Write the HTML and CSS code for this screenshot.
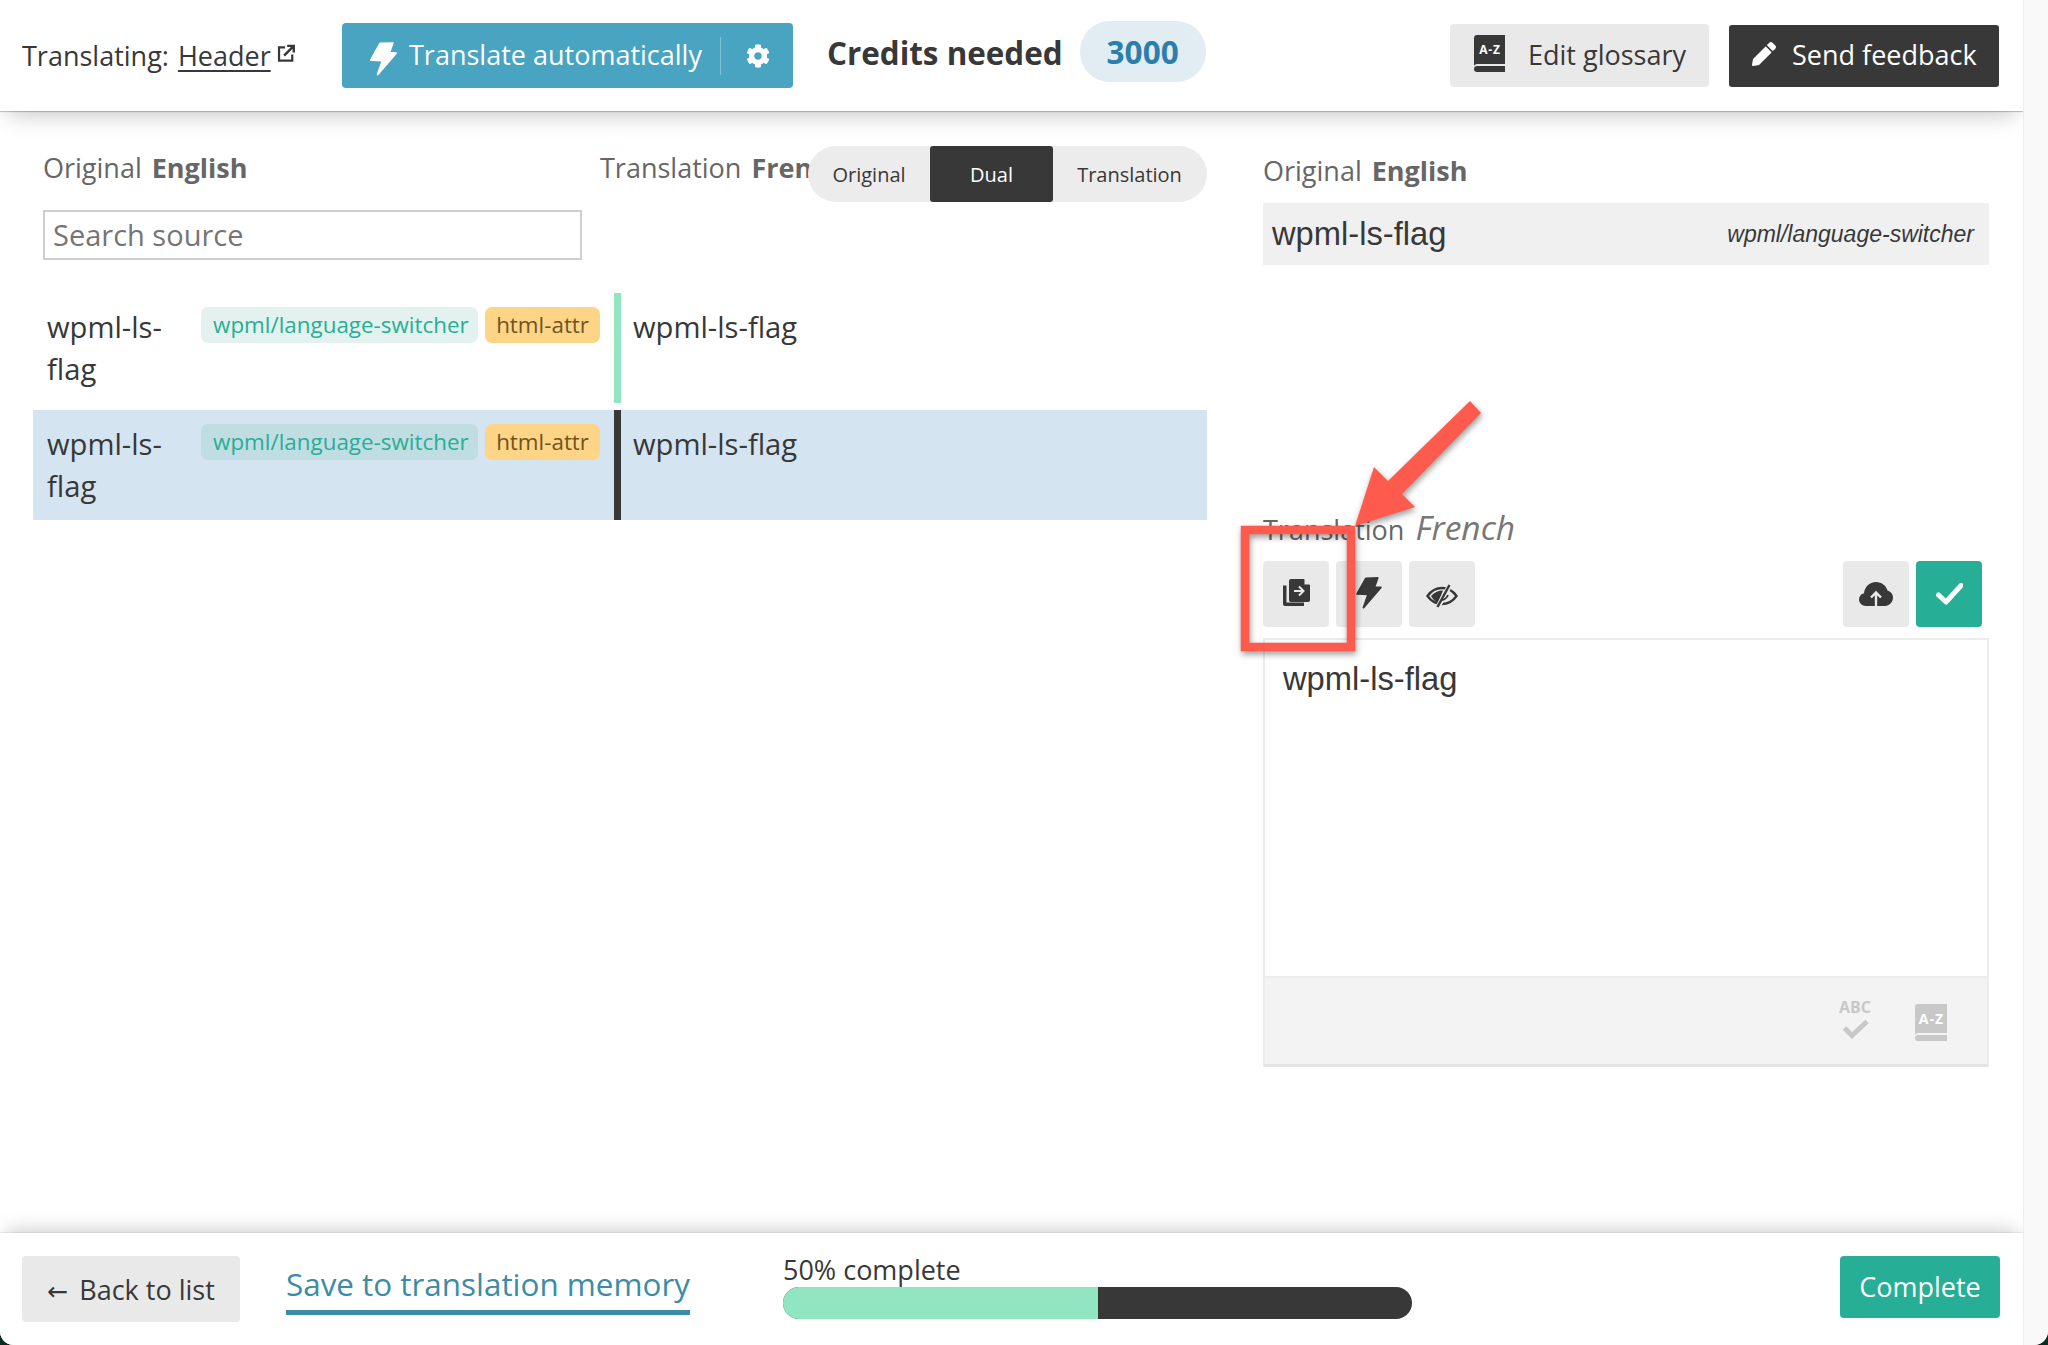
FILE: index.html
```html
<!DOCTYPE html>
<html lang="en">
<head>
<meta charset="utf-8">
<title>Translating: Header</title>
<link rel="stylesheet" href="styles.css">
</head>
<body>
<div class="window">
  <div class="app">
    <header class="topbar">
      <div class="crumb">
        <span>Translating:</span>
        <a class="crumb-link">Header</a>
        <svg class="ext-icon" viewBox="0 0 18 18"><path d="M8 3H2v13h13v-6" fill="none" stroke="currentColor" stroke-width="2.200"/><path d="M7 11 16 2M10 1.500H16.500V8" fill="none" stroke="currentColor" stroke-width="2.400"/></svg>
      </div>
      <button class="btn-auto">
        <svg class="bolt-lg" viewBox="0 0 28 35"><path d="M10.500 1.500 23.500 1 20 11 27 11.500 8 33.500 13 19 1 18.500Z" fill="#fff" stroke="#fff" stroke-width="2" stroke-linejoin="round"/></svg>
        <span class="auto-label">Translate automatically</span>
        <span class="auto-sep"></span>
        <svg class="gear" viewBox="0 0 512 512"><path fill="#fff" d="M487.400 315.700l-42.600-24.600c4.300-23.200 4.300-47 0-70.200l42.600-24.600c4.900-2.800 7.100-8.600 5.500-14-11.100-35.600-30-67.800-54.700-94.600-3.800-4.100-10-5.100-14.800-2.300L380.800 110c-17.900-15.400-38.500-27.300-60.800-35.100V25.800c0-5.600-3.900-10.500-9.400-11.700-36.700-8.200-74.300-7.800-109.200 0-5.500 1.200-9.400 6.100-9.400 11.700V75c-22.200 7.900-42.800 19.800-60.800 35.100L88.700 85.500c-4.900-2.800-11-1.900-14.800 2.300-24.700 26.700-43.600 58.900-54.700 94.600-1.700 5.400.6 11.200 5.500 14L67.300 221c-4.300 23.200-4.300 47 0 70.200l-42.600 24.600c-4.900 2.800-7.100 8.600-5.500 14 11.100 35.600 30 67.800 54.700 94.600 3.800 4.100 10 5.100 14.800 2.300l42.600-24.600c17.900 15.400 38.500 27.300 60.800 35.100v49.200c0 5.600 3.900 10.500 9.400 11.700 36.700 8.200 74.300 7.800 109.200 0 5.500-1.200 9.400-6.100 9.400-11.700v-49.200c22.200-7.900 42.800-19.800 60.800-35.100l42.600 24.600c4.900 2.800 11 1.900 14.800-2.300 24.700-26.700 43.600-58.900 54.700-94.600 1.500-5.500-.7-11.300-5.600-14.100zM256 336c-44.100 0-80-35.900-80-80s35.900-80 80-80 80 35.900 80 80-35.900 80-80 80z"/></svg>
      </button>
      <strong class="credits-label">Credits needed</strong>
      <span class="credits-badge">3000</span>
      <div class="top-actions">
        <button class="btn-glossary">
          <svg class="book" viewBox="0 0 31 37"><path d="M3 0h28v29H3.500C1.500 29 0 30 0 31V3C0 1.300 1.300 0 3 0Z" fill="#383838"/><path d="M3 31h28v6H3c-1.800 0-3-1.200-3-3s1.200-3 3-3Z" fill="#383838"/><text x="16" y="19" class="book-text">A-Z</text></svg>
          <span>Edit glossary</span>
        </button>
        <button class="btn-feedback">
          <svg class="pencil" viewBox="0 0 512 512"><path fill="#fff" d="M497.900 142.100l-46.100 46.100c-4.700 4.700-12.300 4.700-17 0l-111-111c-4.700-4.700-4.700-12.300 0-17l46.100-46.100c18.700-18.700 49.100-18.700 67.900 0l60.100 60.100c18.800 18.700 18.800 49.100 0 67.900zM284.200 99.800L21.600 362.400.4 483.900c-2.900 16.400 11.400 30.600 27.800 27.800l121.500-21.300 262.600-262.600c4.700-4.700 4.700-12.300 0-17l-111-111c-4.800-4.700-12.400-4.700-17.100 0z"/></svg>
          <span>Send feedback</span>
        </button>
      </div>
    </header>

    <main class="workspace">
      <section class="list-pane">
        <div class="list-head">
          <div class="head-label"><span>Original</span> <b>English</b></div>
          <div class="head-label"><span>Translation</span> <b>French</b></div>
        </div>
        <div class="view-switch">
          <span class="seg seg-orig">Original</span>
          <span class="seg seg-dual">Dual</span>
          <span class="seg seg-trans">Translation</span>
        </div>
        <input class="search" type="text" placeholder="Search source">
        <div class="rows">
          <div class="row">
            <div class="src">
              <span class="src-text">wpml-ls-flag</span>
              <span class="tag tag-domain">wpml/language-switcher</span>
              <span class="tag tag-attr">html-attr</span>
            </div>
            <div class="bar bar-done"></div>
            <div class="dst">wpml-ls-flag</div>
          </div>
          <div class="row row-active">
            <div class="src">
              <span class="src-text">wpml-ls-flag</span>
              <span class="tag tag-domain">wpml/language-switcher</span>
              <span class="tag tag-attr">html-attr</span>
            </div>
            <div class="bar bar-current"></div>
            <div class="dst">wpml-ls-flag</div>
          </div>
        </div>
      </section>

      <section class="edit-pane">
        <div class="head-label edit-orig"><span>Original</span> <b>English</b></div>
        <div class="source-box">
          <span class="source-text">wpml-ls-flag</span>
          <em class="source-domain">wpml/language-switcher</em>
        </div>
        <div class="head-label edit-trans"><span>Translation</span> <i>French</i></div>
        <div class="tools">
          <button class="tool">
            <svg class="i-copy" viewBox="0 0 27 27"><path d="M0 6.500h3.500V23.500H21V27H2c-1.200 0-2-.8-2-2Z" fill="#383838"/><path d="M8 0h13l6 6v15c0 1.200-.8 2-2 2H8c-1.200 0-2-.8-2-2V2c0-1.200.8-2 2-2Z" fill="#383838"/><path d="M21.500 0 27 5.500h-5.500Z" fill="#e9e9e9"/><path d="M11 12h9M16 7.500l4.500 4.500-4.500 4.500" fill="none" stroke="#e9e9e9" stroke-width="2"/></svg>
          </button>
          <button class="tool">
            <svg class="i-bolt" viewBox="0 0 28 35"><path d="M10.500 1.500 23.500 1 20 11 27 11.500 8 33.500 13 19 1 18.500Z" fill="#383838" stroke="#383838" stroke-width="2" stroke-linejoin="round"/></svg>
          </button>
          <button class="tool">
            <svg class="i-eye" viewBox="0 0 32 24"><path d="M1.500 12C5 7 10 4 16 4s11 3 14.500 8C27 17 22 20 16 20S5 17 1.500 12Z" fill="none" stroke="#383838" stroke-width="2.400"/><path d="M5 12c3-3.500 7-5.500 12-5.500L12 19C9 18 7 15 5 12Z" fill="#383838"/><path d="M24 1 12 23" stroke="#e9e9e9" stroke-width="5"/><path d="M23.500 1 11.500 23" stroke="#383838" stroke-width="2.400"/><path d="M22 11c-1 2.500-3 4.500-6 5" fill="none" stroke="#383838" stroke-width="1.800"/></svg>
          </button>
          <span class="tools-gap"></span>
          <button class="tool">
            <svg class="i-cloud" viewBox="0 0 34 24"><path d="M7 24C3 24 0 21 0 17.500 0 14.500 2 12 5 11.300 5.500 5 10.500 0 17 0c5.500 0 10 3.500 11.500 8.500 3 .8 5.500 3.500 5.500 7 0 4.700-3.800 8.500-8 8.500Z" fill="#383838"/><path d="M17 24V11M12 15.500l5-5 5 5" fill="none" stroke="#e9e9e9" stroke-width="2.400"/></svg>
          </button>
          <button class="tool tool-ok">
            <svg class="i-check" viewBox="0 0 27 22"><path d="M2.500 12 10 19 25 2.500" fill="none" stroke="#fff" stroke-width="5" stroke-linecap="round" stroke-linejoin="round"/></svg>
          </button>
        </div>
        <div class="editor">
          <div class="editor-text">wpml-ls-flag</div>
          <div class="editor-foot">
            <div class="spell">
              <span class="spell-text">ABC</span>
              <svg class="spell-check" viewBox="0 0 27 20"><path d="M2.500 9 10 16.500 25 2.500" fill="none" stroke="#c8c8c8" stroke-width="5"/></svg>
            </div>
            <svg class="book-muted" viewBox="0 0 32 37"><path d="M3 0h29v29H3.500C1.500 29 0 30 0 31V3C0 1.300 1.300 0 3 0Z" fill="#c8c8c8"/><path d="M3 31h29v6H3c-1.800 0-3-1.200-3-3s1.200-3 3-3Z" fill="#c8c8c8"/><text x="16.500" y="20" class="book-text-muted">A-Z</text></svg>
          </div>
        </div>
      </section>
    </main>

    <footer class="footer">
      <button class="btn-back"><span class="back-arrow">←</span> Back to list</button>
      <a class="save-link">Save to translation memory</a>
      <div class="progress">
        <div class="progress-label">50% complete</div>
        <div class="progress-track"><div class="progress-fill"></div></div>
      </div>
      <button class="btn-complete">Complete</button>
    </footer>
  </div>
  <div class="scroll-rail"></div>
</div>

<svg class="annotation" viewBox="0 0 2048 1345" aria-hidden="true">
  <rect x="1245" y="530" width="106" height="117" class="anno-box"/>
  <path d="M1470 401 1481 413 1402 494 1415 507 1355 526 1374 467 1388 481Z" class="anno-arrow"/>
</svg>
</body>
</html>
```
FILE: styles.css
```css
* { box-sizing: border-box; }
html, body { margin: 0; height: 100%; overflow: hidden; }
body {
  background: #0c2a20;
  font-family: "Open Sans", sans-serif;
  font-size: 27px;
  color: #383838;
}
button { font-family: inherit; border: 0; cursor: pointer; padding: 0; }
b { font-weight: 700; }

.window {
  display: flex;
  height: 1345px;
  border-radius: 0 0 14px 14px;
  overflow: hidden;
  background: #fff;
}
.app {
  width: 2023px;
  height: 100%;
  display: flex;
  flex-direction: column;
  overflow: hidden;
  background: #fff;
}
.scroll-rail {
  flex: 1;
  background: #f9f9f9;
  border-left: 1px solid #eeeeee;
}

/* top bar */
.topbar {
  position: relative;
  z-index: 2;
  flex: none;
  height: 111px;
  display: flex;
  align-items: center;
  padding: 0 24px 0 22px;
  background: #fff;
  box-shadow: 0 1px 1px rgba(0,0,0,.22), 0 12px 22px -8px rgba(0,0,0,.22);
}
.crumb {
  display: flex;
  align-items: center;
  width: 273px;
  flex: none;
  white-space: nowrap;
  margin-top: -1px;
}
.crumb-link { margin-left: 9px; text-decoration: underline; text-underline-offset: 4px; text-decoration-thickness: 2px; }
.ext-icon { width: 19px; height: 19px; margin: -4px 0 0 6px; color: #383838; }
.btn-auto {
  flex: none;
  margin-left: 47px;
  width: 451px;
  height: 65px;
  display: flex;
  align-items: center;
  padding-left: 28px;
  background: #48a4c0;
  color: #fff;
  font-size: 27px;
  border-radius: 4px;
}
.bolt-lg { width: 27px; height: 34px; flex: none; margin-top: 6px; }
.auto-label { margin-left: 12px; margin-top: -2px; white-space: nowrap; }
.auto-sep { width: 1px; height: 38px; margin-left: 18px; background: rgba(255,255,255,.3); flex: none; }
.gear { width: 24px; height: 24px; margin-left: 25px; flex: none; }
.credits-label {
  margin-left: 34px;
  margin-top: -7px;
  font-size: 31.400px;
  white-space: nowrap;
}
.credits-badge {
  flex: none;
  margin-left: 17px;
  margin-top: -8px;
  width: 126px;
  height: 61px;
  border-radius: 30px;
  background: #e2ecf3;
  color: #2c7eab;
  font-size: 31.500px;
  font-weight: 700;
  display: flex;
  align-items: center;
  justify-content: center;
}
.top-actions { margin-left: auto; display: flex; align-items: center; gap: 20px; }
.btn-glossary {
  width: 259px;
  height: 63px;
  display: flex;
  align-items: center;
  padding: 0 0 2px 24px;
  gap: 23px;
  background: #e9e9e9;
  color: #383838;
  font-size: 27px;
  border-radius: 4px;
}
.book { width: 31px; height: 37px; flex: none; margin-top: -3px; }
.book-text { font-family: "Open Sans", sans-serif; font-weight: 700; font-size: 12px; letter-spacing: .8px; fill: #fff; text-anchor: middle; }
.book-text-muted { font-family: "Open Sans", sans-serif; font-weight: 700; font-size: 14px; letter-spacing: 1px; fill: #fff; text-anchor: middle; }
.btn-feedback {
  width: 270px;
  height: 62px;
  display: flex;
  align-items: center;
  padding: 0 0 2px 23px;
  gap: 16px;
  background: #383838;
  color: #fff;
  font-size: 27px;
  border-radius: 3px;
}
.pencil { width: 24px; height: 24px; flex: none; margin-top: -2px; }

/* workspace */
.workspace {
  flex: 1;
  min-height: 0;
  display: flex;
  padding-left: 33px;
  gap: 56px;
}
.list-pane { position: relative; width: 1174px; flex: none; }
.list-head {
  margin-top: 40px;
  height: 34px;
  display: flex;
  padding-left: 10px;
  white-space: nowrap;
}
.head-label { height: 34px; line-height: 34px; color: #666; white-space: nowrap; }
.head-label b { margin-left: 3px; }
.list-head .head-label:first-child { width: 557px; }
.view-switch {
  position: absolute;
  top: 35px;
  right: 0;
  width: 399px;
  height: 56px;
  display: flex;
  border-radius: 28px;
  background: #ececec;
  font-size: 20px;
  color: #383838;
}
.seg { display: flex; align-items: center; justify-content: center; }
.seg-orig { width: 122px; }
.seg-dual { width: 123px; background: #383838; color: #fff; border-radius: 3px; }
.seg-trans { width: 154px; padding-right: 1px; }
.search {
  display: block;
  margin: 25px 0 0 10px;
  width: 539px;
  height: 50px;
  border: 2px solid #cfcfcf;
  background: #fff;
  padding: 0 8px 2px;
  font: 29px "Open Sans", sans-serif;
  color: #383838;
  outline: none;
}
.search::placeholder { color: #757575; opacity: 1; }

.rows { margin-top: 33px; display: flex; flex-direction: column; gap: 7px; }
.row { height: 110px; display: grid; grid-template-columns: 581px 7px 1fr; font-size: 29.200px; line-height: 42px; }
.row-active { background: #d5e4f1; }
.src { display: flex; align-items: flex-start; padding: 0 14px 0 14px; }
.src-text { flex: 1; min-width: 0; padding-top: 13px; }
.tag {
  flex: none;
  margin-top: 14px;
  height: 36px;
  line-height: 36px;
  padding: 0 11px;
  border-radius: 7px;
  font-size: 22.400px;
  white-space: nowrap;
}
.tag-domain { background: #e4f2ef; color: #27ae96; margin-right: 7px; padding: 0 9.500px 0 12.500px; }
.row-active .tag-domain { background: #c0dde3; }
.tag-attr { background: #fed587; color: #6e5420; }
.bar-done { background: #91e5c1; }
.bar-current { background: #383838; }
.dst { padding: 13px 0 0 12px; }

/* editor pane */
.edit-pane { width: 726px; flex: none; display: flex; flex-direction: column; }
.edit-orig { margin-top: 43px; }
.source-box {
  margin-top: 15px;
  height: 62px;
  display: flex;
  align-items: center;
  justify-content: space-between;
  padding: 0 15px 0 9px;
  background: #f0f0f0;
  font-family: "Liberation Sans", sans-serif;
}
.source-text { font-size: 32.700px; }
.source-domain { font-size: 23px; padding-top: 1px; }
.edit-trans { margin-top: 245px; font-size: 27px; }
.edit-trans i { margin-left: 4px; font-size: 33.500px; line-height: 34px; color: #777; }
.tools { margin-top: 17px; display: flex; gap: 7px; padding-right: 7px; }
.tools-gap { flex: 1; }
.tool {
  width: 66px;
  height: 66px;
  display: flex;
  align-items: center;
  justify-content: center;
  background: #e9e9e9;
  border-radius: 4px;
}
.tool-ok { background: #26ae96; }
.i-copy { width: 27px; height: 27px; margin-top: -4px; }
.i-bolt { width: 26px; height: 32px; margin-top: -2px; }
.i-eye { width: 32px; height: 24px; margin-top: 3px; }
.i-cloud { width: 34px; height: 24px; margin-top: -1px; }
.i-check { width: 27px; height: 22px; margin-top: -1px; }
.editor {
  margin-top: 11px;
  flex: none;
  height: 429px;
  border: 2px solid #ececec;
  border-bottom: 3px solid #e4e4e4;
  display: flex;
  flex-direction: column;
  font-family: "Liberation Sans", sans-serif;
}
.editor-text { flex: 1; padding: 18px 0 0 18px; font-size: 32.700px; line-height: 42px; }
.editor-foot {
  height: 88px;
  flex: none;
  display: flex;
  align-items: center;
  justify-content: flex-end;
  gap: 44px;
  padding-right: 40px;
  background: #f3f3f3;
  border-top: 2px solid #ececec;
}
.spell { width: 32px; display: flex; flex-direction: column; align-items: center; margin-top: -3px; }
.spell-text { font: 700 16px/15px "Open Sans", sans-serif; color: #c8c8c8; }
.spell-check { width: 27px; height: 20px; margin-top: 4px; }
.book-muted { width: 32px; height: 37px; margin-top: 2px; }

/* footer */
.footer {
  position: relative;
  z-index: 2;
  flex: none;
  height: 112px;
  display: flex;
  align-items: flex-start;
  padding: 23px 23px 0 22px;
  background: #fff;
  box-shadow: 0 0 1px rgba(0,0,0,.3), 0 -8px 18px -6px rgba(0,0,0,.22);
}
.btn-back {
  flex: none;
  width: 218px;
  height: 66px;
  background: #e9e9e9;
  color: #383838;
  font-size: 27px;
  border-radius: 4px;
}
.back-arrow { font-family: "DejaVu Sans", sans-serif; font-size: 25px; margin-right: 4px; }
.save-link {
  flex: none;
  margin: 7px 0 0 46px;
  padding-bottom: 5px;
  border-bottom: 5px solid #3d8ca5;
  color: #3d8ca5;
  font-size: 31.400px;
  line-height: 42px;
  white-space: nowrap;
}
.progress { flex: none; width: 629px; margin: -4px 0 0 93px; }
.progress-label { font-size: 27px; line-height: 35px; }
.progress-track { height: 32px; border-radius: 16px; background: #383838; overflow: hidden; }
.progress-fill { width: 315px; height: 100%; background: #91e5c1; }
.btn-complete {
  flex: none;
  margin-left: auto;
  width: 160px;
  height: 62px;
  padding-bottom: 2px;
  background: #26ae96;
  color: #fff;
  font-size: 27px;
  border-radius: 4px;
}

/* screenshot annotation */
.annotation {
  position: absolute;
  left: 0;
  top: 0;
  width: 2048px;
  height: 1345px;
  pointer-events: none;
  filter: drop-shadow(1px 3px 3px rgba(0,0,0,.4));
}
.anno-box { fill: none; stroke: #ff5a4e; stroke-width: 8.500px; }
.anno-arrow { fill: #ff5a4e; }
```
